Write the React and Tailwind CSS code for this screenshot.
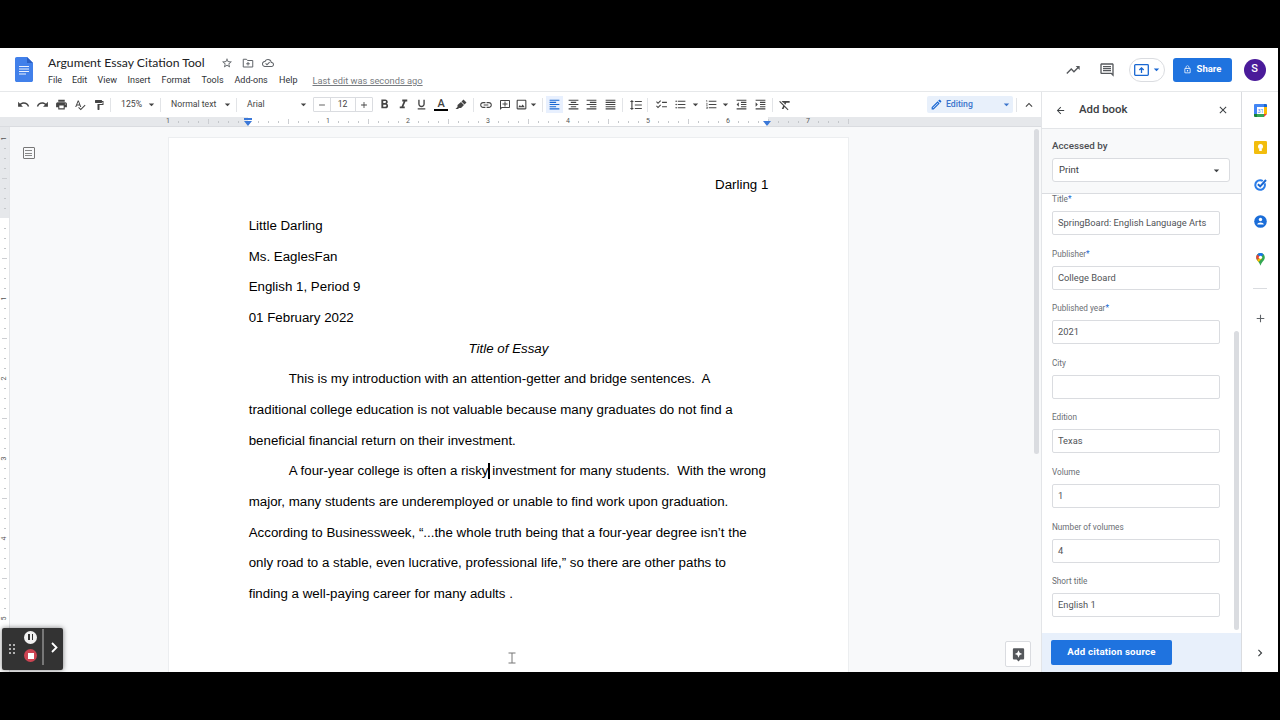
import React from "react";
import {
  MdPrint, MdSpellcheck, MdFormatPaint, MdFormatBold, MdFormatItalic, MdUndo, MdRedo,
  MdFormatUnderlined, MdLink, MdOutlineAddComment, MdOutlineImage, MdFormatAlignLeft,
  MdFormatAlignCenter, MdFormatAlignRight, MdFormatAlignJustify, MdFormatLineSpacing,
  MdChecklist, MdFormatListBulleted, MdFormatListNumbered, MdFormatIndentDecrease,
  MdFormatIndentIncrease, MdFormatClear, MdOutlineEdit, MdKeyboardArrowUp, MdTrendingUp,
  MdOutlineComment, MdLockOutline, MdArrowBack, MdClose, MdStarBorder, MdOutlineCloudDone,
  MdAdd, MdRemove, MdChevronRight, MdArrowDropDown, MdAssistant,
} from "react-icons/md";

const menus = [
  ["File", "w-[24px]"],
  ["Edit", "w-[25.5px]"],
  ["View", "w-[30px]"],
  ["Insert", "w-[34px]"],
  ["Format", "w-[40px]"],
  ["Tools", "w-[33px]"],
  ["Add-ons", "w-[44.5px]"],
  ["Help", "w-[33.5px]"],
];

const fields = [
  { label: "Title", required: true, value: "SpringBoard: English Language Arts" },
  { label: "Publisher", required: true, value: "College Board" },
  { label: "Published year", required: true, value: "2021" },
  { label: "City", value: "" },
  { label: "Edition", value: "Texas" },
  { label: "Volume", value: "1" },
  { label: "Number of volumes", value: "4" },
  { label: "Short title", value: "English 1" },
];

const Cell = ({ w = "w-[18.7px]", className = "", children }) => (
  <div className={`${w} ${className} flex h-full shrink-0 items-center justify-center`}>{children}</div>
);

const Sep = ({ className = "" }) => <div className={`${className} h-[14px] w-px shrink-0 bg-[#e2e4e7]`} />;

const Caret = ({ className = "" }) => <MdArrowDropDown size={13} className={`shrink-0 ${className}`} />;

const DocsLogo = () => (
  <svg width="18" height="25" viewBox="0 0 18 25">
    <path d="M1.8 0H12l6 6v17.200c0 1-.8 1.800-1.800 1.800H1.800C.8 25 0 24.200 0 23.200V1.800C0 .8.8 0 1.800 0z" fill="#4180ea" />
    <path d="M12 0l6 6h-6z" fill="#2a5fc4" />
    <path d="M4 9.500h10M4 12h10M4 14.500h10M4 17h7" stroke="#eaf1fd" strokeWidth="1.200" />
  </svg>
);

const FolderPlus = () => (
  <svg width="12" height="12" viewBox="0 0 24 24" fill="none" stroke="#5f6368" strokeWidth="2">
    <path d="M2.500 4.500h6.500l2 2.500h10.500v13h-19z" />
    <path d="M12 10v7M8.500 13.500h7" />
  </svg>
);

const Highlighter = () => (
  <svg width="12" height="12" viewBox="0 0 24 24" fill="#444">
    <path d="M17 1l6 6-4 4-6-6zM12 6l6 6-6 6H8l-2 2H1l4-4v-4z" />
  </svg>
);

const Header = () => (
  <div className="flex h-[43px] shrink-0 items-start bg-white">
    <div className="pt-[9px] pl-[15px]"><DocsLogo /></div>
    <div className="ml-[15px] flex flex-col">
      <div className="flex h-[18px] items-center pt-[11px]">
        <span className="relative top-[1px] w-[173px] font-[Lato,sans-serif] text-[12.200px] whitespace-nowrap text-[#202124]">Argument Essay Citation Tool</span>
        <div className="flex w-[53px] items-center justify-between text-[#5f6368]">
          <MdStarBorder size={12} />
          <FolderPlus />
          <MdOutlineCloudDone size={12} />
        </div>
      </div>
      <div className="mt-[8px] flex h-[14px] items-center text-[9px] text-[#303236]">
        {menus.map(([name, w]) => (
          <span key={name} className={`${w} whitespace-nowrap`}>{name}</span>
        ))}
        <span className="text-[9.300px] whitespace-nowrap text-[#777b80] underline">Last edit was seconds ago</span>
      </div>
    </div>
    <div className="ml-auto flex h-[43px] items-center pr-[12.500px]">
      <MdTrendingUp size={16} className="text-[#55585c]" />
      <MdOutlineComment size={16} className="ml-[18px] text-[#55585c]" />
      <div className="ml-[14px] flex h-[24px] w-[36px] items-center justify-center rounded-full border border-[#dadce0]">
        <svg width="15" height="12" viewBox="0 0 15 12" fill="none" stroke="#1967d2">
          <rect x=".7" y=".7" width="13.600" height="10.600" rx=".8" strokeWidth="1.300" />
          <path d="M7.500 9V4M5.300 6l2.200-2.200L9.700 6" strokeWidth="1.300" />
        </svg>
        <Caret className="-mr-1 ml-px text-[#1967d2]" />
      </div>
      <div className="ml-[8px] flex h-[24px] w-[59px] items-center justify-center gap-[5px] rounded-[3px] bg-[#1f73df] text-[9.500px] font-bold text-white">
        <MdLockOutline size={9} />
        <span>Share</span>
      </div>
      <div className="ml-[12px] flex h-[22px] w-[22px] items-center justify-center rounded-full bg-[#4a1b9a] text-[11px] font-medium text-white">S</div>
    </div>
  </div>
);

const Toolbar = () => (
  <div className="flex h-[25px] shrink-0 items-center bg-white pl-[14.600px] text-[8.700px] text-[#444]">
    <Cell><MdUndo size={13} /></Cell>
    <Cell><MdRedo size={13} /></Cell>
    <Cell><MdPrint size={13} /></Cell>
    <Cell><MdSpellcheck size={12} /></Cell>
    <Cell><MdFormatPaint size={12} /></Cell>
    <Sep className="ml-[2px]" />
    <span className="ml-[10px] w-[24px]">125%</span>
    <Caret />
    <Sep className="ml-[2px]" />
    <span className="ml-[10px] w-[50px] whitespace-nowrap">Normal text</span>
    <Caret />
    <Sep className="ml-[2px]" />
    <span className="ml-[10px] w-[49.500px]">Arial</span>
    <Caret />
    <div className="ml-[3px] flex h-[15px] w-[60px] items-center rounded-[1px] border border-[#dadce0]">
      <div className="flex w-[16px] justify-center"><MdRemove size={10} /></div>
      <div className="flex h-full flex-1 items-center justify-center border-x border-[#dadce0]">12</div>
      <div className="flex w-[16px] justify-center"><MdAdd size={10} /></div>
    </div>
    <Cell className="ml-[2.500px]"><MdFormatBold size={15} /></Cell>
    <Cell><MdFormatItalic size={15} /></Cell>
    <Cell><MdFormatUnderlined size={13} /></Cell>
    <Cell w="w-[20px]">
      <div className="flex flex-col items-center">
        <span className="h-[10px] text-[11px] leading-[10px] font-medium">A</span>
        <span className="h-[2px] w-[14px] bg-black" />
      </div>
    </Cell>
    <Cell w="w-[20px]"><Highlighter /></Cell>
    <Sep className="ml-[2px]" />
    <Cell className="ml-[2.500px]"><MdLink size={14} /></Cell>
    <Cell><MdOutlineAddComment size={12} className="-scale-x-100" /></Cell>
    <Cell w="w-[16px]"><MdOutlineImage size={13} /></Cell>
    <Caret className="-ml-[3px]" />
    <Sep className="ml-[2px]" />
    <Cell className="ml-[2px]">
      <div className="flex h-[17px] w-[17px] items-center justify-center bg-[#e8f0fe] text-[#1967d2]"><MdFormatAlignLeft size={13} /></div>
    </Cell>
    <Cell><MdFormatAlignCenter size={13} /></Cell>
    <Cell><MdFormatAlignRight size={13} /></Cell>
    <Cell><MdFormatAlignJustify size={13} /></Cell>
    <Sep className="ml-[2px]" />
    <Cell className="ml-[4px]"><MdFormatLineSpacing size={14} /></Cell>
    <Sep className="ml-[2px]" />
    <Cell className="ml-[4px]"><MdChecklist size={13} /></Cell>
    <Cell><MdFormatListBulleted size={13} /></Cell>
    <Caret className="-ml-[1px]" />
    <Cell><MdFormatListNumbered size={13} /></Cell>
    <Caret className="-ml-[1px]" />
    <Cell><MdFormatIndentDecrease size={13} /></Cell>
    <Cell><MdFormatIndentIncrease size={13} /></Cell>
    <Sep className="ml-[2px]" />
    <Cell className="ml-[3px]"><MdFormatClear size={14} /></Cell>
    <div className="ml-auto flex h-[17px] w-[86px] items-center rounded-[2px] bg-[#e8f0fb] pl-[3px] font-medium text-[#3b74cc]">
      <MdOutlineEdit size={13} className="text-[#1967d2]" />
      <span className="ml-[3px]">Editing</span>
      <Caret className="ml-auto" />
    </div>
    <Sep className="ml-[3px]" />
    <Cell w="w-[24px]"><MdKeyboardArrowUp size={14} /></Cell>
  </div>
);

// one cell per eighth of an inch, numbers on whole inches
const marks = Array.from({ length: 69 }, (_, i) => i);

const Ruler = () => (
  <div className="relative flex h-[10px] shrink-0 items-center border-b border-[#dadce0] bg-[#e6e8eb] pl-[163px]">
    <div className="absolute top-0 left-[248px] h-[9px] w-[520px] bg-white" />
    {marks.map((i) => (
      <div key={i} className="relative flex w-[10px] justify-center text-[7px] leading-none text-[#555]">
        {i % 8 === 0 ? (
          i !== 8 && <span>{Math.abs(i / 8 - 1)}</span>
        ) : (
          <span className={i % 4 === 0 ? "h-[5px] w-px bg-[#ccced2]" : "h-[2px] w-px bg-[#c4c7ca]"} />
        )}
      </div>
    ))}
    <svg className="absolute top-[1px] left-[243px]" width="10" height="9" viewBox="0 0 10 9" fill="#3b78d8">
      <path d="M1 0h8v2H1zM1 3h8L5 8z" />
    </svg>
    <svg className="absolute top-[4px] left-[762px]" width="10" height="5" viewBox="0 0 10 5" fill="#3b78d8">
      <path d="M1 0h8L5 5z" />
    </svg>
  </div>
);

const SideRuler = () => (
  <div className="relative w-[10px] shrink-0 overflow-hidden border-r border-[#e3e5e8] bg-white pt-[6px]">
    <div className="absolute top-0 left-0 h-[91px] w-full bg-[#e6e8eb]" />
    {marks.slice(0, 54).map((i) => (
      <div key={i} className="relative flex h-[10px] items-center justify-center text-[7px] leading-none text-[#555]">
        {i % 8 === 0 ? (
          i !== 8 && <span className="-rotate-90">{Math.abs(i / 8 - 1)}</span>
        ) : (
          <span className={i % 4 === 0 ? "h-px w-[5px] bg-[#ccced2]" : "h-px w-[2px] bg-[#c4c7ca]"} />
        )}
      </div>
    ))}
  </div>
);

const Page = () => (
  <div className="mt-[10px] ml-[158px] h-[600px] w-[681px] shrink-0 border border-[#eceef0] bg-white px-[79.700px] font-['Liberation_Sans',Arial,sans-serif] text-[13.320px] leading-[30.650px] whitespace-pre text-black">
    <p className="pt-[32.300px] text-right">Darling 1</p>
    <div className="mt-[10px]">
      <p>Little Darling</p>
      <p>Ms. EaglesFan</p>
      <p>English 1, Period 9</p>
      <p>01 February 2022</p>
      <p className="text-center italic">Title of Essay</p>
      <p className="pl-[40px]">This is my introduction with an attention-getter and bridge sentences.  A</p>
      <p>traditional college education is not valuable because many graduates do not find a</p>
      <p>beneficial financial return on their investment.</p>
      <p className="pl-[40px]">
        A four-year college is often a risky
        <span className="relative"><span className="absolute top-0 left-0 h-[16px] w-[1.500px] bg-black" /></span>
        {" investment for many students.  With the wrong"}
      </p>
      <p>major, many students are underemployed or unable to find work upon graduation.</p>
      <p>According to Businessweek, “...the whole truth being that a four-year degree isn’t the</p>
      <p>only road to a stable, even lucrative, professional life,” so there are other paths to</p>
      <p>finding a well-paying career for many adults .</p>
    </div>
  </div>
);

const BookPanel = () => (
  <div className="flex w-[200px] shrink-0 flex-col border-l border-[#e3e5e8] bg-white">
    <div className="flex h-[37px] shrink-0 items-center border-b border-[#e3e5e8] pr-[12px] pl-[13px] text-[#3c4043]">
      <MdArrowBack size={11} />
      <span className="ml-[13px] text-[11.400px] font-medium">Add book</span>
      <MdClose size={12} className="ml-auto" />
    </div>
    <div className="h-[65px] shrink-0 border-b border-[#dadce0] bg-[#f8f9fa] pt-[10px] pr-[11px] pl-[10px]">
      <div className="text-[9.800px] leading-[14px] font-medium text-[#4a4d51]">Accessed by</div>
      <div className="mt-[5px] flex h-[24px] items-center justify-between rounded-[3px] border border-[#dadce0] bg-white pr-[6px] pl-[6px] text-[9.500px] text-[#3c4043]">
        <span>Print</span>
        <Caret />
      </div>
    </div>
    <div className="relative flex-1 overflow-hidden pl-[10px]">
      {fields.map((f) => (
        <div key={f.label} className="h-[54.600px] w-[168px]">
          <div className="text-[8.200px] leading-[10px] text-[#6a6e73]">
            {f.label}
            {f.required && <span className="text-[#1967d2]">*</span>}
          </div>
          <div className="mt-[7px] flex h-[24px] items-center rounded-[2px] border border-[#dadce0] pl-[5px] text-[9.300px] whitespace-nowrap text-[#505357]">
            {f.value}
          </div>
        </div>
      ))}
      <div className="absolute top-[137px] right-[2px] h-[299px] w-[5px] rounded-full bg-[#dadce0]" />
    </div>
    <div className="flex h-[39px] shrink-0 items-center bg-[#e8f0fb] pl-[9px]">
      <div className="flex h-[25px] w-[121px] items-center justify-center rounded-[2px] bg-[#1f73df] text-[9.700px] font-bold tracking-[0.200px] text-white">
        Add citation source
      </div>
    </div>
  </div>
);

const Rail = () => (
  <div className="flex w-[37px] shrink-0 flex-col items-center border-l border-[#dadce0] bg-white pt-[12px]">
    <svg width="13" height="13" viewBox="0 0 13 13">
      <path d="M0 1a1 1 0 011-1h9v3H3v7H0z" fill="#4285f4" />
      <path d="M10 0h2a1 1 0 011 1v2h-3z" fill="#1967d2" />
      <path d="M10 3h3v7h-3z" fill="#fbbc04" />
      <path d="M3 10h7v3H3z" fill="#34a853" />
      <path d="M0 10h3v3H1a1 1 0 01-1-1z" fill="#188038" />
      <path d="M10 10h3l-3 3z" fill="#ea4335" />
      <path d="M3 3h7v7H3z" fill="#fff" />
      <text x="6.500" y="8.500" fontSize="5.500" textAnchor="middle" fill="#4285f4">31</text>
    </svg>
    <svg className="mt-[24px]" width="13" height="13" viewBox="0 0 13 13">
      <rect width="13" height="13" rx="1.300" fill="#f2bd0d" />
      <circle cx="6.500" cy="5.500" r="2.500" fill="#fff" />
      <path d="M5.200 7.500h2.600v2.500H5.200z" fill="#fff" />
    </svg>
    <svg className="mt-[24px]" width="13" height="13" viewBox="0 0 13 13" fill="none">
      <path d="M10.600 5.300A4.800 4.800 0 116.200 2.200c1 0 1.900.3 2.600.8" stroke="#2b7de9" strokeWidth="2" />
      <path d="M3.900 6.200l2.300 2.200L12 2" stroke="#1967d2" strokeWidth="2" />
    </svg>
    <svg className="mt-[24px]" width="13" height="13" viewBox="0 0 13 13">
      <circle cx="6.500" cy="6.500" r="6.300" fill="#1b6dd8" />
      <circle cx="6.500" cy="4.500" r="1.700" fill="#fff" />
      <path d="M3.200 9.500c0-2.800 6.600-2.800 6.600 0z" fill="#fff" />
    </svg>
    <svg className="mt-[25px]" width="9" height="13" viewBox="0 0 9 13">
      <path d="M4.500 0A4.300 4.300 0 00.2 4.300c0 3.400 3.300 4.700 4.300 8.500 1-3.800 4.300-5.100 4.300-8.500A4.300 4.300 0 004.500 0z" fill="#34a853" />
      <path d="M1.200 1.500A4.300 4.300 0 017.500 1.200L4.500 4.500z" fill="#1a73e8" />
      <path d="M1.300 1.400L4.500 4.300 1.100 7C0 5.200-.2 3 1.300 1.400z" fill="#ea4335" />
      <path d="M4.500 4.500L1 7l1.500 2L6 5.500z" fill="#fbbc04" />
      <circle cx="4.500" cy="4.300" r="1.600" fill="#fff" />
    </svg>
    <div className="mt-[22px] h-px w-[14px] bg-[#dadce0]" />
    <MdAdd size={13} className="mt-[23px] text-[#5f6368]" />
    <MdChevronRight size={14} className="mt-auto mb-[12px] text-[#3c4043]" />
  </div>
);

const Recorder = () => (
  <div className="absolute bottom-[2px] left-[2px] flex h-[42px] w-[61px] items-center rounded-[2px] bg-[#333] shadow-[0_0_5px_rgba(0,0,0,0.5)]">
    <div className="ml-[7px] grid grid-cols-2 gap-[2px]">
      {marks.slice(0, 6).map((i) => (
        <span key={i} className="h-[2px] w-[2px] rounded-full bg-[#ddd]" />
      ))}
    </div>
    <div className="mb-[5px] ml-[9px] flex flex-col gap-[5.500px]">
      <div className="flex h-[13px] w-[13px] items-center justify-center gap-[2px] rounded-full bg-[#f1f1f1]">
        <span className="h-[6px] w-[1.500px] bg-[#333]" />
        <span className="h-[6px] w-[1.500px] bg-[#333]" />
      </div>
      <div className="flex h-[13px] w-[13px] items-center justify-center rounded-full bg-[#cc4452]">
        <span className="h-[6px] w-[6px] bg-white" />
      </div>
    </div>
    <div className="mb-[4px] ml-[5px] h-[36px] w-[1.500px] bg-[#777]" />
    <svg className="mb-[4px] ml-[7px]" width="7" height="11" viewBox="0 0 7 11" fill="none" stroke="#fff" strokeWidth="1.800">
      <path d="M1 1l4.500 4.500L1 10" />
    </svg>
  </div>
);

export default function App() {
  return (
    <div className="h-[720px] w-[1280px] overflow-hidden bg-black py-[48px] font-[Roboto,sans-serif]">
      <div className="relative flex h-[624px] w-[1278px] flex-col bg-white">
        <Header />
        <div className="flex min-h-0 flex-1 border-t border-[#e6e8ea]">
          <div className="flex w-[1041px] shrink-0 flex-col">
            <Toolbar />
            <Ruler />
            <div className="relative flex min-h-0 flex-1 overflow-hidden bg-[#f8f9fa]">
              <SideRuler />
              <div className="absolute top-[20px] left-[22.500px] flex h-[12px] w-[12px] flex-col items-center justify-center gap-[1.500px] rounded-[1px] border border-[#777]">
                <span className="h-px w-[7px] bg-[#888]" />
                <span className="h-px w-[7px] bg-[#888]" />
                <span className="h-px w-[7px] bg-[#888]" />
              </div>
              <Page />
              <div className="absolute top-[2px] right-[2px] h-[325px] w-[5px] rounded-full bg-[#dadce0]" />
              <div className="absolute right-[10px] bottom-[5px] flex h-[26px] w-[26px] items-center justify-center rounded-[2px] border border-[#dadce0] bg-white">
                <MdAssistant size={15} className="text-[#55585c]" />
              </div>
              <svg className="absolute bottom-[8px] left-[508px]" width="8" height="12" viewBox="0 0 8 12" fill="none" stroke="#777">
                <path d="M.5 1h7M.5 11h7M4 1v10" />
              </svg>
            </div>
          </div>
          <BookPanel />
          <Rail />
        </div>
        <Recorder />
      </div>
    </div>
  );
}
